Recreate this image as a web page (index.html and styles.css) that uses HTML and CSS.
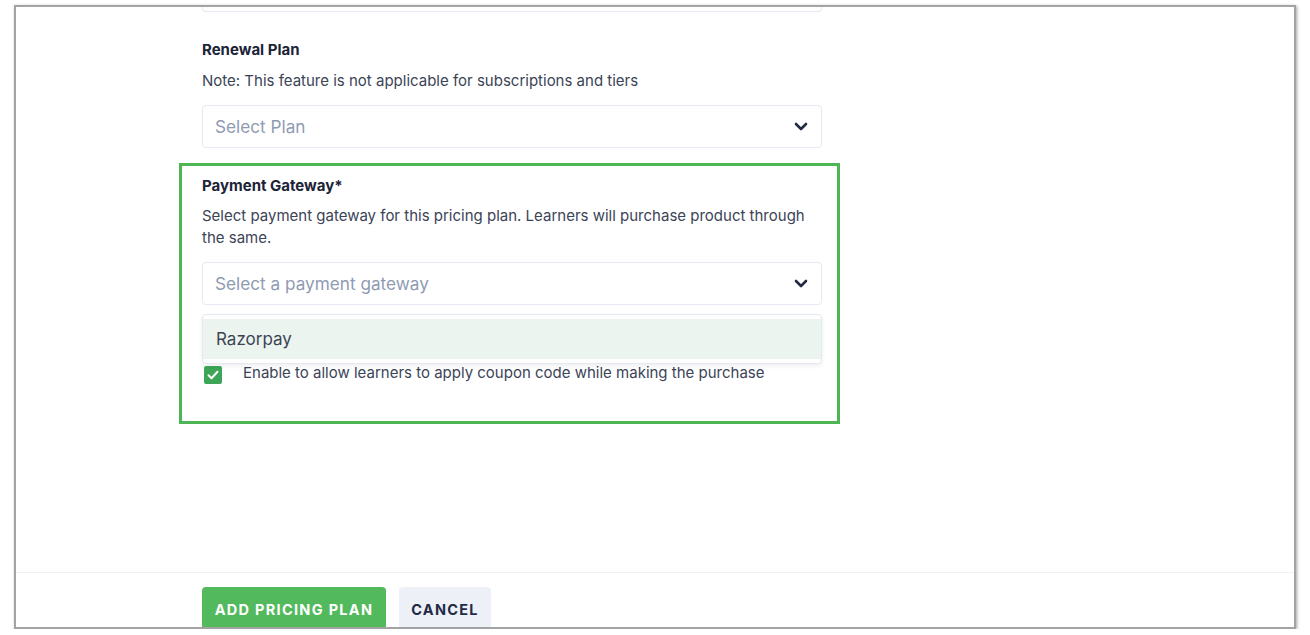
FILE: index.html
```html
<!DOCTYPE html>
<html lang="en">
<head>
<meta charset="utf-8">
<title>Add Pricing Plan</title>
<link rel="stylesheet" href="styles.css">
</head>
<body>
<div class="frame">
  <main class="main">
    <div class="form">
      <div class="prev-input"></div>

      <section class="field renewal">
        <h3 class="label">Renewal Plan</h3>
        <p class="note">Note: This feature is not applicable for subscriptions and tiers</p>
        <div class="select">
          <span class="placeholder">Select Plan</span>
          <svg class="chev" width="14" height="9" viewBox="0 0 14 9"><path d="M2 2l5 5 5-5" fill="none" stroke="#222b45" stroke-width="2.6" stroke-linecap="round" stroke-linejoin="round"/></svg>
        </div>
      </section>

      <section class="highlight">
        <h3 class="label">Payment Gateway*</h3>
        <p class="desc">Select payment gateway for this pricing plan. Learners will purchase product through the same.</p>
        <div class="select-wrap">
          <div class="select">
            <span class="placeholder">Select a payment gateway</span>
            <svg class="chev" width="14" height="9" viewBox="0 0 14 9"><path d="M2 2l5 5 5-5" fill="none" stroke="#222b45" stroke-width="2.6" stroke-linecap="round" stroke-linejoin="round"/></svg>
          </div>
          <ul class="menu">
            <li class="option active">Razorpay</li>
          </ul>
        </div>
        <label class="check-row">
          <span class="checkbox">
            <svg width="12" height="10" viewBox="0 0 12 10"><path d="M1.5 5.2l3 3 6-6.4" fill="none" stroke="#fff" stroke-width="2" stroke-linecap="round" stroke-linejoin="round"/></svg>
          </span>
          <span class="check-text">Enable to allow learners to apply coupon code while making the purchase</span>
        </label>
      </section>
    </div>
  </main>
  <footer class="footer">
    <button class="btn btn-primary">ADD PRICING PLAN</button>
    <button class="btn btn-secondary">CANCEL</button>
  </footer>
</div>
</body>
</html>
```

FILE: styles.css
```css
* { box-sizing: border-box; }

html, body {
  margin: 0;
  padding: 0;
  background: #ffffff;
}

body {
  font-family: Inter, "Open Sans", "Liberation Sans", sans-serif;
  color: #222b45;
  padding: 5px 14px 0 14px;
}

.frame {
  width: 1282px;
  height: 624px;
  border: 2px solid #a3a3a3;
  box-shadow: 1px 1px 3px rgba(0,0,0,0.35);
  background: #fff;
  overflow: hidden;
  display: flex;
  flex-direction: column;
}

.main {
  height: 565px;
  flex: none;
}

.form {
  margin-left: 186px;
  width: 620px;
}

.prev-input {
  height: 5px;
  border: 1px solid #e4e9f2;
  border-top: none;
  border-radius: 0 0 4px 4px;
}

.label {
  margin: 0;
  font-size: 15px;
  line-height: 20px;
  font-weight: 700;
  color: #1c2437;
}

.renewal {
  margin-top: 28px;
}

.note {
  margin: 11px 0 0;
  font-size: 15px;
  line-height: 20px;
  color: #3b4456;
}

.select {
  height: 43px;
  border: 1px solid #e4e9f2;
  border-radius: 4px;
  background: #fff;
  display: flex;
  align-items: center;
  justify-content: space-between;
  padding: 0 13px 0 12px;
}

.renewal .select {
  margin-top: 14px;
}

.placeholder {
  font-size: 17.2px;
  color: #8f9bb3;
}

.chev { display: block; }

.highlight {
  margin: 15px -18px 0 -23px;
  border: 3px solid #4db554;
  padding: 10px 15px 39px 20px;
}

.desc {
  margin: 9px 0 0;
  font-size: 15px;
  line-height: 22px;
  color: #3b4456;
}

.select-wrap {
  position: relative;
  margin-top: 13px;
  padding-bottom: 57px;
}

.menu {
  position: absolute;
  left: 0;
  right: 0;
  top: 52px;
  margin: 0;
  padding: 4px 0 4px;
  list-style: none;
  background: #fff;
  border: 1px solid #e4e9f2;
  border-radius: 4px;
  box-shadow: 0 2px 4px rgba(34,43,69,0.08);
  z-index: 2;
}

.option {
  height: 40px;
  display: flex;
  align-items: center;
  padding-left: 13px;
  font-size: 17px;
  color: #3b4456;
}

.option.active {
  background: #ebf4ee;
}

.check-row {
  display: flex;
  align-items: center;
  height: 20px;
}

.checkbox {
  width: 18px;
  height: 18px;
  margin-left: 2px;
  border-radius: 2px;
  background: #3da557;
  display: flex;
  align-items: center;
  justify-content: center;
  flex: none;
  margin-top: 6px;
}

.check-text {
  margin-left: 21px;
  font-size: 15px;
  color: #3b4456;
}

.footer {
  flex: none;
  border-top: 1px solid #eef0f5;
  padding: 14px 0 0 186px;
  display: flex;
  gap: 13px;
}

.btn {
  height: 44px;
  border: none;
  border-radius: 4px;
  font-family: Inter, "Open Sans", "Liberation Sans", sans-serif;
  font-size: 14.5px;
  font-weight: 700;
  letter-spacing: 1.3px;
  padding: 0 12px 0 12px;
  cursor: pointer;
}

.btn-primary {
  width: 184px;
  background: #52ba5c;
  color: #fff;
}

.btn-secondary {
  width: 92px;
  background: #edf0f7;
  color: #222b45;
}
```
